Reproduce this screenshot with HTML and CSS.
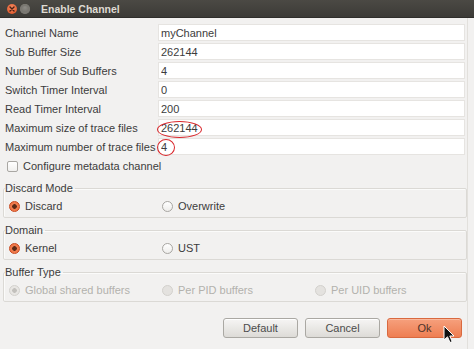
FILE: index.html
```html
<!DOCTYPE html>
<html lang="en">
<head>
    <meta charset="UTF-8">
    <meta name="viewport" content="width=device-width, initial-scale=1.0">
    <title>Enable Channel</title>
    <link rel="stylesheet" href="styles.css">
</head>
<body>
    <div class="window">
        <div class="titlebar">
            <span class="wbtn close">
                <svg width="10" height="10" viewBox="0 0 10 10"><path d="M3 3 L7 7 M7 3 L3 7" stroke="#4a2015" stroke-width="1.4" stroke-linecap="round"/></svg>
            </span>
            <span class="wbtn minimize"></span>
            <span class="title">Enable Channel</span>
        </div>

        <div class="content">
            <div class="fields">
                <label>Channel Name</label>
                <input type="text" value="myChannel">
                <label>Sub Buffer Size</label>
                <input type="text" value="262144">
                <label>Number of Sub Buffers</label>
                <input type="text" value="4">
                <label>Switch Timer Interval</label>
                <input type="text" value="0">
                <label>Read Timer Interval</label>
                <input type="text" value="200">
                <label>Maximum size of trace files</label>
                <input type="text" value="262144">
                <label>Maximum number of trace files</label>
                <input type="text" value="4">
            </div>

            <label class="check"><span class="box"></span>Configure metadata channel</label>

            <fieldset class="group">
                <legend>Discard Mode</legend>
                <div class="radios">
                    <label class="radio"><span class="dot on"></span>Discard</label>
                    <label class="radio"><span class="dot"></span>Overwrite</label>
                </div>
            </fieldset>

            <fieldset class="group">
                <legend>Domain</legend>
                <div class="radios">
                    <label class="radio"><span class="dot on"></span>Kernel</label>
                    <label class="radio"><span class="dot"></span>UST</label>
                </div>
            </fieldset>

            <fieldset class="group">
                <legend>Buffer Type</legend>
                <div class="radios disabled">
                    <label class="radio"><span class="dot on"></span>Global shared buffers</label>
                    <label class="radio"><span class="dot"></span>Per PID buffers</label>
                    <label class="radio"><span class="dot"></span>Per UID buffers</label>
                </div>
            </fieldset>

            <div class="buttons">
                <button>Default</button>
                <button>Cancel</button>
                <button class="ok">Ok</button>
            </div>
        </div>

        <span class="mark mark-size"></span>
        <span class="mark mark-number"></span>

        <svg class="cursor" width="13" height="20" viewBox="0 0 13 20">
            <path d="M1 1 L1 15 L4.5 11.8 L7 17.5 L9.2 16.6 L6.8 11 L11 11 Z" fill="#111" stroke="#fff" stroke-width="1" stroke-linejoin="round"/>
        </svg>
    </div>
</body>
</html>
```

FILE: styles.css
```css
body {
    margin: 0;
    background-color: #f2f1f0;
    font-family: "Liberation Sans", Arial, sans-serif;
    font-size: 11px;
    color: #3c3c3c;
}

.window {
    position: relative;
    width: 474px;
    height: 349px;
    overflow: hidden;
}

.titlebar {
    height: 18px;
    display: flex;
    align-items: center;
    padding-left: 7px;
    background: linear-gradient(#4b4944, #3c3b37);
    border-bottom: 1px solid #2f2e2b;
    box-sizing: border-box;
}

.wbtn {
    width: 10px;
    height: 10px;
    border-radius: 50%;
    margin-right: 3px;
    display: flex;
}

.close {
    background: radial-gradient(circle at 50% 35%, #f58b62, #df4f20);
}

.minimize {
    background: radial-gradient(circle at 50% 35%, #8e8c86, #64625d);
    box-shadow: inset 0 0 0 2px #7a7872;
}

.title {
    margin-left: 8px;
    font-weight: bold;
    font-size: 10.5px;
    color: #dfdbd2;
}

.content {
    padding: 6px 0 0 0;
    margin-right: 6px;
    border-right: 1px solid #e2e0dc;
    height: 331px;
    box-sizing: border-box;
}

.fields {
    display: grid;
    grid-template-columns: 153px 1fr;
    row-gap: 2px;
    padding-left: 5px;
    padding-right: 2px;
    align-items: center;
}

.fields input {
    height: 17px;
    box-sizing: border-box;
    border: 1px solid #e6e4e1;
    background: #fff;
    font-family: inherit;
    font-size: 11px;
    color: #3c3c3c;
    padding: 0 2px;
    margin: 0;
    outline: none;
}

.check {
    display: flex;
    align-items: center;
    height: 14px;
    margin: 4px 0 9px 7px;
}

.box {
    width: 9px;
    height: 9px;
    border: 1px solid #a9a7a3;
    border-radius: 2px;
    background: linear-gradient(#ffffff, #f1f0ee);
    margin-right: 5px;
}

.group {
    margin: 0 0 6px 3px;
    padding: 4px 0 4px 5px;
    border: 1px solid #dbd9d5;
    border-radius: 2px;
    box-shadow: inset 1px 1px 0 #fbfbfa;
}

.group legend {
    padding: 0 2px 0 0;
    margin-left: -4px;
    line-height: 13px;
}

.radios {
    display: grid;
    grid-template-columns: 153px 153px 1fr;
}

.radio {
    display: flex;
    align-items: center;
    height: 14px;
}

.dot {
    width: 9px;
    height: 9px;
    border-radius: 50%;
    border: 1px solid #a8a6a2;
    background: linear-gradient(#ffffff, #eeedeb);
    margin-right: 5px;
    position: relative;
}

.dot.on {
    border-color: #c9471c;
    background: radial-gradient(circle, #5b2a17 0 2px, #f07a4c 2.6px);
}

.disabled {
    color: #b3b1ad;
}

.disabled .dot {
    border-color: #d3d1cd;
    background: #e4e2df;
}

.disabled .dot.on {
    background: radial-gradient(circle, #c2c0bc 0 2px, #e8e6e3 2.6px);
}

.buttons {
    display: flex;
    justify-content: flex-end;
    gap: 7px;
    margin-top: 16px;
    padding-right: 5px;
}

.buttons button {
    width: 75px;
    height: 20px;
    font-family: inherit;
    font-size: 11px;
    color: #4c4c4c;
    border: 1px solid #aaa8a3;
    border-radius: 3px;
    background: linear-gradient(#f6f5f4, #dddbd7);
    box-shadow: inset 0 1px 0 #ffffff;
    padding: 0;
}

.buttons .ok {
    border-color: #d9693f;
    background: linear-gradient(#f6a07d, #ee7e52);
    box-shadow: inset 0 1px 0 #f9b89c;
    color: #4e3329;
}

.mark {
    position: absolute;
    border: 1px solid #d9262b;
    border-radius: 50%;
}

.mark-size {
    left: 157px;
    top: 121px;
    width: 43px;
    height: 15px;
}

.mark-number {
    left: 157px;
    top: 139px;
    width: 16px;
    height: 15px;
}

.cursor {
    position: absolute;
    left: 443px;
    top: 325px;
}
```
